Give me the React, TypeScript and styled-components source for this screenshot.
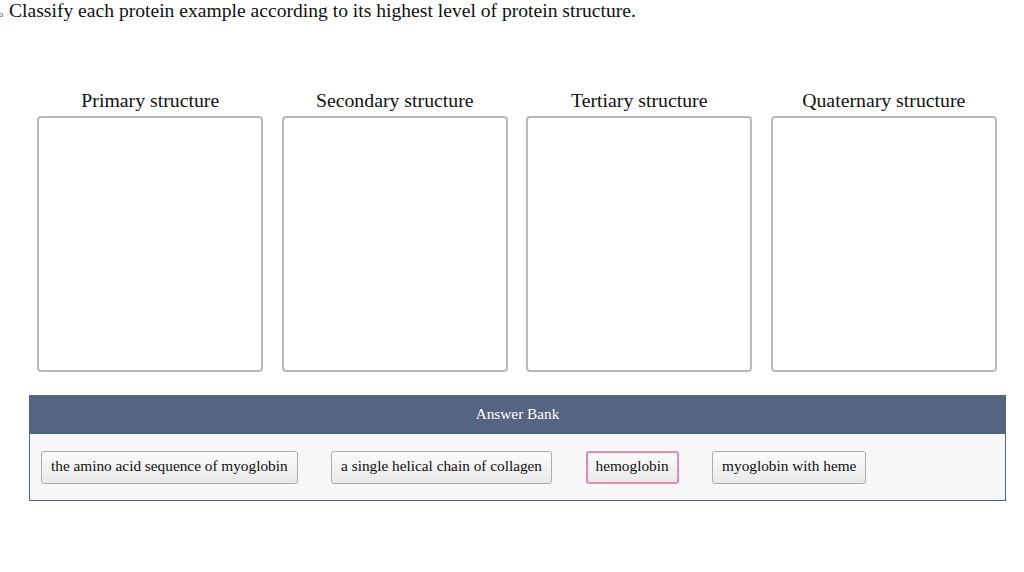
import React from "react";
import styled, { createGlobalStyle } from "styled-components";

const Global = createGlobalStyle`
  html, body { margin: 0; padding: 0; background: #ffffff; }
  body { font-family: "Liberation Serif", "Times New Roman", serif; color: #111; }
`;

const Page = styled.div`
  width: 1024px;
  height: 572px;
  overflow: hidden;
`;

const Prompt = styled.div`
  display: flex;
  align-items: baseline;
  height: 22px;
  font-size: 19.6px;
  line-height: 22px;
  white-space: nowrap;
`;

const Marker = styled.span`
  font-size: 9px;
  color: #555;
  width: 10px;
  margin-left: -1px;
`;

const Work = styled.div`
  margin: 66px 0 0 28px;
  width: 978px;
`;

const Columns = styled.div`
  display: grid;
  grid-template-columns: repeat(4, 1fr);
`;

const Column = styled.div`
  display: flex;
  flex-direction: column;
  align-items: center;
`;

const Label = styled.div`
  font-size: 19.8px;
  line-height: 24px;
  height: 24px;
  margin-bottom: 4px;
  white-space: nowrap;
`;

const DropZone = styled.div`
  box-sizing: border-box;
  width: 226px;
  height: 256px;
  border: 2px solid #b9b9b9;
  border-radius: 4px;
  background: #fff;
`;

const Bank = styled.div`
  margin-top: 23px;
  margin-left: 1px;
  width: 977px;
  box-sizing: border-box;
  border: 1px solid #556480;
  border-top: none;
`;

const BankHeader = styled.div`
  height: 39px;
  box-sizing: border-box;
  padding-bottom: 2px;
  background: #556480;
  color: #fff;
  font-size: 15.3px;
  display: flex;
  align-items: center;
  justify-content: center;
`;

const BankBody = styled.div`
  background: #f7f7f7;
  height: 66px;
  box-sizing: border-box;
  padding: 17px 0 0 11px;
  display: flex;
  gap: 33.5px;
  align-items: flex-start;
`;

const Chip = styled.div<{ $active?: boolean }>`
  box-sizing: border-box;
  height: 33px;
  padding: 0 ${(p) => (p.$active ? "8px" : "9px")} 3px;
  display: flex;
  align-items: center;
  font-size: 15.3px;
  white-space: nowrap;
  border: ${(p) => (p.$active ? "2px solid #e38bb3" : "1px solid #acacac")};
  border-radius: 3px;
  background: linear-gradient(#fbfbfb, #e9e9e9);
  color: #111;
`;

const categories = [
  "Primary structure",
  "Secondary structure",
  "Tertiary structure",
  "Quaternary structure",
];

const answers = [
  { text: "the amino acid sequence of myoglobin" },
  { text: "a single helical chain of collagen" },
  { text: "hemoglobin", active: true },
  { text: "myoglobin with heme" },
];

export default function App() {
  return (
    <Page>
      <Global />
      <Prompt>
        <Marker>o</Marker>
        Classify each protein example according to its highest level of protein structure.
      </Prompt>
      <Work>
        <Columns>
          {categories.map((c) => (
            <Column key={c}>
              <Label>{c}</Label>
              <DropZone />
            </Column>
          ))}
        </Columns>
        <Bank>
          <BankHeader>Answer Bank</BankHeader>
          <BankBody>
            {answers.map((a) => (
              <Chip key={a.text} $active={a.active}>
                {a.text}
              </Chip>
            ))}
          </BankBody>
        </Bank>
      </Work>
    </Page>
  );
}
